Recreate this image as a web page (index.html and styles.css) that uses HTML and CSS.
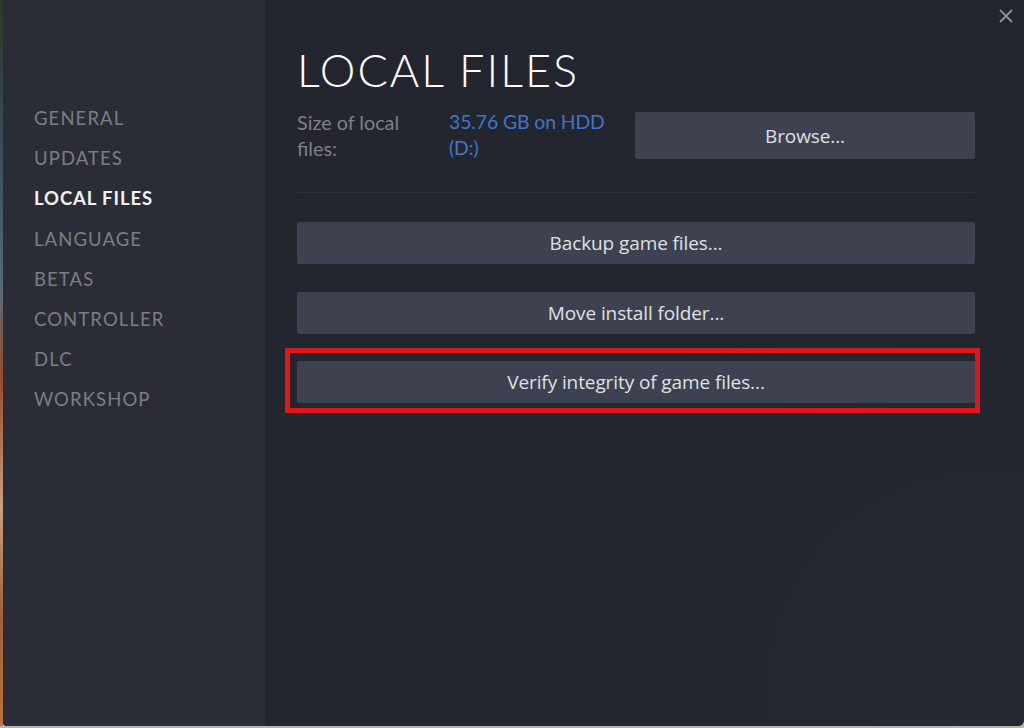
FILE: index.html
```html
<!DOCTYPE html>
<html>
<head>
<meta charset="utf-8">
<link rel="stylesheet" href="styles.css">
</head>
<body>
<div class="desktop">
  <div class="edge"></div>
  <div class="window">
    <nav class="sidebar">
      <div class="nav-item">GENERAL</div>
      <div class="nav-item">UPDATES</div>
      <div class="nav-item active">LOCAL FILES</div>
      <div class="nav-item">LANGUAGE</div>
      <div class="nav-item">BETAS</div>
      <div class="nav-item">CONTROLLER</div>
      <div class="nav-item">DLC</div>
      <div class="nav-item">WORKSHOP</div>
    </nav>
    <main class="content">
      <button class="close" aria-label="Close">
        <svg width="14" height="14" viewBox="0 0 14 14"><path d="M1 1 L13 13 M13 1 L1 13" stroke="#8d9096" stroke-width="1.8" fill="none"/></svg>
      </button>
      <h1 class="title">LOCAL FILES</h1>
      <div class="size-row">
        <div class="size-label">Size of local<br>files:</div>
        <div class="size-value">35.76 GB on HDD<br>(D:)</div>
        <div class="btn browse">Browse...</div>
      </div>
      <div class="divider"></div>
      <div class="actions">
        <div class="btn">Backup game files...</div>
        <div class="btn">Move install folder...</div>
        <div class="highlight">
          <div class="btn">Verify integrity of game files...</div>
        </div>
      </div>
    </main>
  </div>
</div>
</body>
</html>
```
FILE: styles.css
```css
* { box-sizing: border-box; }
html, body { margin: 0; padding: 0; }
body {
  width: 1024px;
  height: 728px;
  overflow: hidden;
  background: #b9b3ad;
  font-family: "Lato", "Noto Sans", sans-serif;
}
.desktop {
  display: flex;
  height: 726px;
}
.edge {
  width: 3px;
  background: linear-gradient(#2a3a28 0%, #3c4a5a 20%, #5a6a7a 40%, #9a4a2a 52%, #c8a080 70%, #a06030 85%, #c07040 100%);
}
.window {
  flex: 1;
  display: flex;
  background: #23262e;
  border-radius: 0 0 6px 4px;
  overflow: hidden;
}
.sidebar {
  width: 262px;
  background: #2a2d35;
  padding: 104px 0 0 31px;
  display: flex;
  flex-direction: column;
}
.nav-item {
  height: 40.2px;
  line-height: 28px;
  font-size: 18.5px;
  color: #7b7e84;
  letter-spacing: 1.1px;
}
.nav-item.active {
  color: #f0f2f4;
  font-weight: 700;
  letter-spacing: 0.9px;
}
.content {
  flex: 1;
  position: relative;
  padding: 44px 49px 0 32px;
  background: radial-gradient(circle at 95% 95%, #262931 0%, #23262e 45%, #23262e 100%);
}
.close {
  position: absolute;
  top: 9px;
  right: 11px;
  background: none;
  border: none;
  padding: 0;
  width: 14px;
  height: 14px;
  cursor: pointer;
}
.title {
  margin: 0;
  font-family: "Lato", sans-serif;
  font-weight: 300;
  font-size: 45px;
  line-height: 52px;
  letter-spacing: 2px;
  color: #ffffff;
}
.size-row {
  display: flex;
  align-items: flex-start;
  margin-top: 16px;
  height: 64px;
}
.size-label {
  width: 152px;
  font-size: 19.8px;
  line-height: 26px;
  margin-top: -3px;
  color: #7e8187;
}
.size-value {
  width: 186px;
  font-size: 19.4px;
  line-height: 26px;
  letter-spacing: -0.1px;
  margin-top: -3px;
  color: #4176c6;
}
.btn {
  height: 42px;
  background: #3d4150;
  border-radius: 2px;
  color: #dfe1e4;
  font-family: "Open Sans", sans-serif;
  font-size: 19px;
  letter-spacing: -0.1px;
  display: flex;
  align-items: center;
  justify-content: center;
}
.browse {
  width: 340px;
  height: 47px;
}
.divider {
  height: 1px;
  background: #2f323b;
  margin-top: 16px;
}
.actions {
  display: flex;
  flex-direction: column;
  gap: 28px;
  margin-top: 29px;
}
.highlight {
  margin: -14px -5px -10px -12px;
  border: 5px solid #e0161f;
  padding: 8px 0 5px 7px;
}
```
